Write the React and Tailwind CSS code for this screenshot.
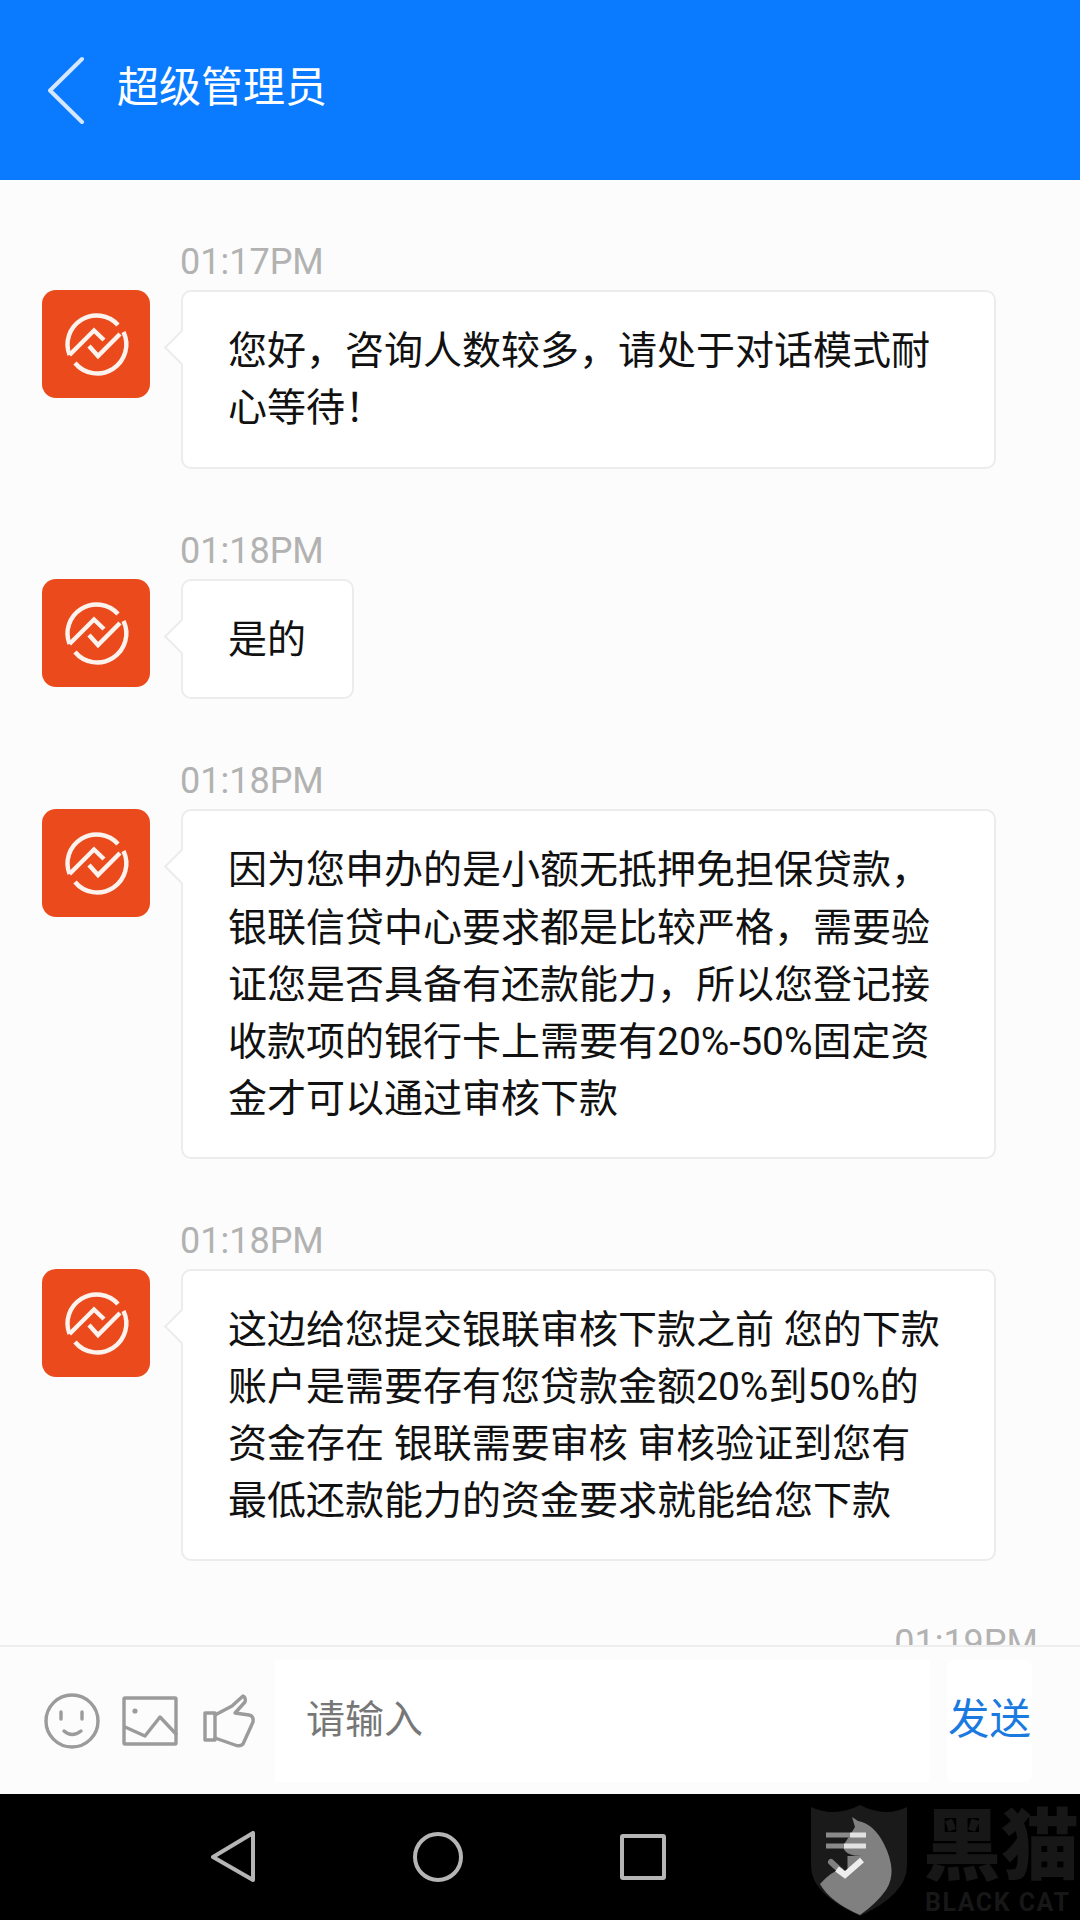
import React from 'react';

const messages = [
  {
    time: '01:17PM',
    bubble: 'w-[815px] min-h-[179px]',
    lines: ['您好，咨询人数较多，请处于对话模式耐', '心等待！'],
  },
  {
    time: '01:18PM',
    bubble: 'w-[173px] min-h-[120px]',
    lines: ['是的'],
  },
  {
    time: '01:18PM',
    bubble: 'w-[815px]',
    lines: [
      '因为您申办的是小额无抵押免担保贷款，',
      '银联信贷中心要求都是比较严格，需要验',
      '证您是否具备有还款能力，所以您登记接',
      '收款项的银行卡上需要有20%-50%固定资',
      '金才可以通过审核下款',
    ],
  },
  {
    time: '01:18PM',
    bubble: 'w-[815px]',
    lines: [
      '这边给您提交银联审核下款之前 您的下款',
      '账户是需要存有您贷款金额20%到50%的',
      '资金存在 银联需要审核 审核验证到您有',
      '最低还款能力的资金要求就能给您下款',
    ],
  },
];

function Avatar() {
  return (
    <div className="w-[108px] h-[108px] shrink-0 rounded-[14px] bg-[#ea4a1c] flex items-center justify-center">
      <svg width="80" height="80" viewBox="0 0 80 80" fill="none" stroke="#fdf3ee" strokeWidth="4.4">
        {/* ring split in two arcs */}
        <path d="M13.5 51 A29 29 0 0 1 62 21" />
        <path d="M19 59 A29 29 0 0 0 67.5 28" />
        {/* the two zigzags */}
        <path d="M13.5 51 L38 26.5 L48 36" />
        <path d="M33 42 L42 52 L64 30" />
      </svg>
    </div>
  );
}

function Message({ time, bubble, lines }) {
  return (
    <div className="mb-[61px]">
      <div className="pl-[180px] h-[43px] mb-[6px] leading-[43px] text-[36px] text-[#b2b2b2]">{time}</div>
      <div className="flex items-start gap-[31px] pl-[42px]">
        <Avatar />
        <div className={`relative ${bubble} bg-white border-2 border-[#ececec] rounded-[10px] pl-[45px] pr-[46px] pt-[31px] pb-[28px] text-[39px] leading-[57.25px] text-[#111111]`}>
          <span className="absolute left-[-14px] top-[43px] w-[25px] h-[25px] rotate-45 bg-white border-l-2 border-b-2 border-[#ececec]" />
          {lines.map((line, i) => (
            <div key={i} className="relative whitespace-pre">{line}</div>
          ))}
        </div>
      </div>
    </div>
  );
}

function InputIcons() {
  return (
    <svg width="240" height="70" viewBox="30 1687 240 70" fill="none" stroke="#9b9b9b" strokeWidth="3.4" strokeLinejoin="round" strokeLinecap="round">
      {/* smiley */}
      <circle cx="72" cy="1722" r="26" />
      <path d="M61 1713 V1720 M82 1713 V1720 M64 1732 Q72 1739 81 1732" />
      {/* picture */}
      <rect x="124" y="1699" width="52" height="46" rx="1" />
      <circle cx="135" cy="1712" r="2.6" fill="#9b9b9b" stroke="none" />
      <path d="M125 1728 L145 1737 L160 1718 L176 1735" />
      {/* thumb up */}
      <path d="M205 1714 H215 V1741 H205 Z" />
      <path d="M215 1716 L232 1707 L243 1697 Q246 1698 245 1703 L235 1714 L249 1716 Q254 1717 253 1723 L243 1745 Q240 1748 235 1746 L215 1739" />
    </svg>
  );
}

function NavBar() {
  return (
    <div className="relative h-[126px] shrink-0 bg-black flex items-center overflow-hidden">
      <svg className="ml-[211px]" width="44" height="52" viewBox="211 1831 44 52" fill="none" stroke="#b5b5b5" strokeWidth="4" strokeLinejoin="round">
        <path d="M213 1857 L253 1833 V1880 Z" />
      </svg>
      <div className="ml-[158px] w-[50px] h-[50px] rounded-full border-4 border-[#b5b5b5]" />
      <div className="ml-[157px] w-[46px] h-[46px] rounded-[3px] border-4 border-[#b5b5b5]" />

      {/* black cat mark in the corner */}
      <svg className="absolute left-[800px] top-0" width="120" height="125" viewBox="0 0 120 125">
        <path d="M11 13 Q35 24 60 11 Q85 24 107 13 V72 Q107 100 60 122 Q11 100 11 72 Z" fill="#1a1a1a" />
        <path d="M26 41 H50 M26 52 H44" stroke="#8a8a8a" strokeWidth="5" />
        <path d="M52 23 L58 27 Q74 30 84 50 Q98 78 86 96 Q76 110 60 121 Q30 108 20 90 Q30 78 45 73 L47 62 L62 62 Q44 62 43 52 L55 33 Z" fill="#808080" />
        <path d="M50 41 H66 M44 52 H66" stroke="#e2e2e2" strokeWidth="5" />
        <path d="M45 60 V78" stroke="#1a1a1a" strokeWidth="5" />
        <path d="M31 68 L45 81" stroke="#808080" strokeWidth="6" strokeLinecap="round" />
        <path d="M37 75 L45 81 L62 66" stroke="#eeeeee" strokeWidth="6" fill="none" />
      </svg>
      <div className="absolute left-[923px] top-[14px] text-[78px] leading-[80px] font-black text-[#171717] whitespace-nowrap">黑猫</div>
      <div className="absolute left-[925px] top-[96px] text-[25px] leading-[26px] font-bold tracking-[1.5px] text-[#171717] whitespace-nowrap">BLACK CAT</div>
    </div>
  );
}

export default function App() {
  return (
    <div className="w-[1080px] h-[1920px] flex flex-col overflow-hidden bg-[#fcfcfc] font-['Roboto','Noto_Sans_CJK_SC',sans-serif]">
      {/* Header */}
      <div className="h-[180px] shrink-0 bg-[#0a7bff] flex items-center text-white">
        <svg className="ml-[46px]" width="40" height="68" viewBox="46 55 40 68" fill="none" stroke="#d5e7ff" strokeWidth="4" strokeLinecap="round" strokeLinejoin="round">
          <path d="M82 58 L50 89.5 L82 121" />
        </svg>
        <span className="ml-[31px] mb-[5px] text-[42px] leading-none">超级管理员</span>
      </div>

      {/* Conversation */}
      <div className="flex-1 min-h-0 overflow-hidden pt-[61px]">
        {messages.map((m, i) => (
          <Message key={i} {...m} />
        ))}
        <div className="pr-[42px] h-[43px] leading-[43px] text-right text-[36px] text-[#b2b2b2]">01:19PM</div>
      </div>

      {/* Input bar */}
      <div className="h-[149px] shrink-0 border-t-2 border-[#eeeeee] bg-[#fcfcfc] flex items-center pl-[30px]">
        <InputIcons />
        <div className="ml-[5px] w-[655px] h-[122px] bg-white flex items-center pl-[31px] text-[39px] text-[#777777]">请输入</div>
        <div className="ml-[17px] w-[85px] h-[122px] bg-white rounded-[8px] flex items-center justify-center text-[41.5px] text-[#1a7ae0] whitespace-nowrap">发送</div>
      </div>

      <NavBar />
    </div>
  );
}
